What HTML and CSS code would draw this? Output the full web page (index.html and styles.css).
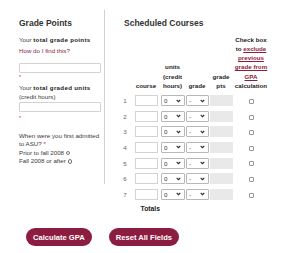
FILE: index.html
```html
<!DOCTYPE html>
<html lang="en">
<head>
    <meta charset="UTF-8">
    <meta name="viewport" content="width=device-width, initial-scale=1.0">
    <title>GPA Calculator</title>
    <link rel="stylesheet" href="styles.css">
</head>
<body>
    <!-- Calculator -->
    <div class="calculator">
        <!-- Grade Points Column -->
        <div class="grade-points">
            <h2>Grade Points</h2>
            <label class="field-label" for="total-points">Your <b>total grade points</b></label>
            <a class="help-link" href="#">How do I find this?</a>
            <input type="text" id="total-points" class="text-input">
            <span class="required">*</span>

            <label class="field-label second" for="total-units">Your <b>total graded units</b><br>(credit hours)</label>
            <input type="text" id="total-units" class="text-input units-input">
            <span class="required required-units">*</span>

            <div class="admitted">
                <p>When were you first admitted to ASU? <span class="star">*</span></p>
                <label>Prior to fall 2008 <input type="radio" name="admitted" value="prior"></label>
                <label>Fall 2008 or after <input type="radio" name="admitted" value="after"></label>
            </div>
        </div>

        <!-- Scheduled Courses Column -->
        <div class="courses">
            <h2>Scheduled Courses</h2>
            <table class="course-table">
                <thead>
                    <tr>
                        <th></th>
                        <th>course</th>
                        <th>units<br>(credit<br>hours)</th>
                        <th>grade</th>
                        <th>grade<br>pts</th>
                        <th class="check-head">Check box<br>to <a href="#">exclude<br>previous<br>grade from<br>GPA</a><br>calculation</th>
                    </tr>
                </thead>
                <tbody id="course-rows"></tbody>
                <tfoot>
                    <tr>
                        <td class="totals" colspan="2">Totals</td>
                        <td colspan="4"></td>
                    </tr>
                </tfoot>
            </table>
        </div>
    </div>

    <!-- Buttons -->
    <div class="buttons">
        <button type="button" class="btn">Calculate GPA</button>
        <button type="button" class="btn">Reset All Fields</button>
    </div>

    <script>
        let rows = document.getElementById('course-rows');
        let chevron = '<svg class="chevron" width="5" height="4" viewBox="0 0 10 8"><path d="M1.5 2 L5 5.5 L8.5 2" fill="none" stroke="#333" stroke-width="2.2"/></svg>';

        for (let i = 1; i <= 7; i++) {
            let tr = document.createElement('tr');
            tr.innerHTML =
                '<td class="num">' + i + '</td>' +
                '<td class="course"><input type="text" class="course-input"></td>' +
                '<td class="units"><span class="select-wrap"><select><option>0</option></select>' + chevron + '</span></td>' +
                '<td class="grade"><span class="select-wrap"><select><option>-</option></select>' + chevron + '</span></td>' +
                '<td class="pts"><div class="pts-box"></div></td>' +
                '<td class="check"><input type="checkbox"></td>';
            rows.appendChild(tr);
        }
    </script>
</body>
</html>
```

FILE: styles.css
```css
/* Global Styles */
body {
    font-family: "Liberation Sans", Arial, sans-serif;
    font-size: 6.2px;
    line-height: 9px;
    color: #3a3a3a;
    margin: 0;
    padding: 0;
    background-color: #fff;
}

h2 {
    font-size: 8.5px;
    line-height: 10px;
    font-weight: bold;
    margin: 8px 0 0;
    color: #333;
}

a {
    color: #8c1d40;
}

/* Layout */
.calculator {
    display: flex;
    align-items: flex-start;
    margin-top: 10px;
}

/* Grade Points Column */
.grade-points {
    width: 82px;
    padding: 0 3px 18px 19px;
    border-right: 1px solid #d0d0d0;
}

.field-label {
    display: block;
    margin-top: 6.5px;
}

.field-label b {
    font-weight: bold;
    letter-spacing: 0.3px;
    color: #222;
}

.field-label.second {
    margin-top: 2px;
}

.help-link {
    display: block;
    margin-top: 2px;
    text-decoration: none;
}

.text-input {
    display: block;
    box-sizing: border-box;
    width: 82px;
    height: 10px;
    margin: 8px 0 0;
    padding: 0;
    border: 1px solid #d3d3d3;
    border-radius: 1px;
}

.text-input.units-input {
    margin-top: 1.5px;
}

.required {
    display: block;
    line-height: 8px;
    color: #c8102e;
    font-size: 5px;
}

.required-units {
    margin-top: 2px;
}

.admitted {
    margin-top: 10px;
    line-height: 8.4px;
}

.admitted p {
    margin: 0;
}

.admitted .star {
    color: #c8102e;
}

.admitted label {
    display: block;
    height: 8.4px;
}

.admitted input[type="radio"] {
    appearance: none;
    display: inline-block;
    box-sizing: border-box;
    width: 4.5px;
    height: 4.5px;
    margin: 0;
    border: 0.8px solid #777;
    border-radius: 50%;
    vertical-align: middle;
}

/* Scheduled Courses Column */
.courses {
    padding-left: 13px;
}

.courses h2 {
    margin-left: 6px;
}

.course-table {
    border-collapse: collapse;
    margin-top: 6.7px;
}

.course-table th {
    font-weight: bold;
    line-height: 9.2px;
    vertical-align: bottom;
    text-align: center;
    padding: 0 0 3px;
    color: #222;
}

.course-table th a {
    text-decoration: underline;
}

.course-table td {
    padding: 2.3px 0;
    vertical-align: middle;
}

.num {
    width: 14px;
    text-align: center;
    color: #666;
}

.course {
    padding: 0 2px 0 3px !important;
}

.course-input {
    display: block;
    box-sizing: border-box;
    width: 23px;
    height: 11px;
    margin: 0;
    padding: 0;
    border: 1px solid #d3d3d3;
}

.units,
.grade,
.pts {
    padding-left: 1px !important;
}

.select-wrap {
    position: relative;
    display: block;
}

.select-wrap select {
    appearance: none;
    display: block;
    box-sizing: border-box;
    width: 24px;
    height: 11px;
    margin: 0;
    padding: 0 0 0 2px;
    font-family: "Liberation Sans", Arial, sans-serif;
    font-size: 6.2px;
    color: #333;
    background: #fff;
    border: 1px solid #b8b8b8;
    border-radius: 1px;
}

.grade .select-wrap select {
    width: 23px;
}

.chevron {
    position: absolute;
    right: 4px;
    top: 3.5px;
    pointer-events: none;
}

.pts-box {
    width: 23px;
    height: 11px;
    background-color: #e9e9e9;
}

.check {
    width: 36px;
    text-align: center;
}

.check input[type="checkbox"] {
    appearance: none;
    display: inline-block;
    width: 5px;
    height: 5px;
    margin: 0;
    border: 0.8px solid #999;
    border-radius: 1px;
    vertical-align: middle;
}

.totals {
    text-align: right;
    font-weight: bold;
    font-size: 6.8px;
    color: #222;
    padding-right: 0 !important;
}

/* Buttons */
.buttons {
    display: flex;
    gap: 17px;
    padding-left: 26px;
    margin-top: 12.5px;
}

.btn {
    height: 18px;
    padding: 0 7px;
    font-family: "Liberation Sans", Arial, sans-serif;
    font-size: 7.6px;
    font-weight: bold;
    color: #fff;
    background-color: #8c1d40;
    border: none;
    border-radius: 9px;
    cursor: pointer;
}
```
